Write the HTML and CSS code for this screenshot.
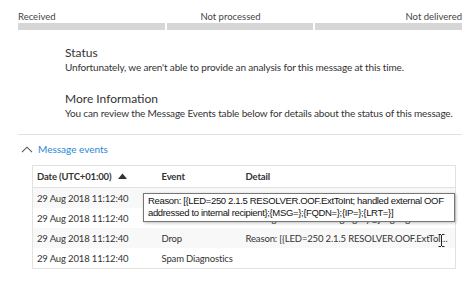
FILE: index.html
```html
<!DOCTYPE html>
<html lang="en">

<head>
  <meta charset="utf-8">
  <title>Message trace details</title>
  <link rel="stylesheet" href="styles.css">
</head>

<body>
  <div class="page">
    <!-- Delivery progress -->
    <section class="progress">
      <div class="progress-labels">
        <span>Received</span>
        <span>Not processed</span>
        <span>Not delivered</span>
      </div>
      <div class="progress-bars">
        <div class="bar"></div>
        <div class="bar"></div>
        <div class="bar"></div>
      </div>
    </section>

    <!-- Status text -->
    <section class="info">
      <h2>Status</h2>
      <p>Unfortunately, we aren't able to provide an analysis for this message at this time.</p>
      <h2>More Information</h2>
      <p>You can review the Message Events table below for details about the status of this message.</p>
    </section>

    <!-- Message events -->
    <section class="events">
      <div class="events-toggle">
        <svg class="chevron" width="12" height="7" viewBox="0 0 12 7">
          <polyline points="1,6.2 6,1.2 11,6.2" fill="none" stroke="#555" stroke-width="1.1" />
        </svg>
        <span>Message events</span>
      </div>

      <div class="table-wrap">
        <table class="events-table">
          <thead>
            <tr>
              <th class="col-date">Date (UTC+01:00)
                <svg class="sort" width="9" height="6" viewBox="0 0 9 6">
                  <polygon points="0,6 4.5,0.5 9,6" fill="#333" />
                </svg>
              </th>
              <th class="col-event">Event</th>
              <th>Detail</th>
            </tr>
          </thead>
          <tbody>
            <tr class="alt">
              <td>29 Aug 2018 11:12:40</td>
              <td>Receive</td>
              <td>Message received by: AM5PR0701MB2</td>
            </tr>
            <tr>
              <td>29 Aug 2018 11:12:40</td>
              <td>Redirect</td>
              <td>Message redirected to: gregory@jang.org</td>
            </tr>
            <tr class="alt">
              <td>29 Aug 2018 11:12:40</td>
              <td>Drop</td>
              <td class="detail">Reason: [{LED=250 2.1.5 RESOLVER.OOF.ExtToInt; handled external OOF</td>
            </tr>
            <tr>
              <td>29 Aug 2018 11:12:40</td>
              <td>Spam Diagnostics</td>
              <td></td>
            </tr>
          </tbody>
        </table>

        <!-- hover tooltip -->
        <div class="tooltip">Reason: [{LED=250 2.1.5 RESOLVER.OOF.ExtToInt; handled external OOF addressed to internal recipient};{MSG=};{FQDN=};{IP=};{LRT=}]</div>
        <svg class="cursor" width="7" height="13" viewBox="0 0 7 13">
          <path d="M0.5 0.5h2.5M4 0.5h2.5M3.5 1v11M0.5 12.5h2.5M4 12.5h2.5" stroke="#222" stroke-width="1" fill="none" />
        </svg>
      </div>
    </section>
  </div>
</body>

</html>
```

FILE: styles.css
```css
body {
  margin: 0;
  background: #fff;
  color: #333;
  font-family: Lato, "Open Sans", sans-serif;
}

.page {
  width: 444px;
  padding: 10px 0 0 18px;
}

.progress-labels {
  display: flex;
  justify-content: space-between;
  font-size: 9.5px;
  line-height: 13px;
  color: #444;
}

.progress-bars {
  display: flex;
  gap: 2px;
}

.bar {
  flex: 1;
  height: 7px;
  background: #d6d6d6;
}

.info {
  padding: 15px 0 0 47px;
}

.info h2 {
  margin: 0;
  font-size: 12px;
  font-weight: 400;
  line-height: 16px;
  color: #333;
}

.info p {
  margin: 0 0 17px;
  font-size: 10px;
  letter-spacing: -0.15px;
  line-height: 13px;
  color: #333;
}

.info p:last-child {
  margin-bottom: 0;
}

.events {
  border-top: 1px solid #e3e3e3;
  margin-top: 14px;
  padding-top: 6px;
}

.events-toggle {
  display: flex;
  align-items: center;
  gap: 5px;
  padding-left: 3px;
  font-size: 10px;
  line-height: 16px;
  color: #2b88d8;
}

.table-wrap {
  position: relative;
  margin: 8px 0 0 14px;
  width: 424px;
}

.events-table {
  width: 100%;
  table-layout: fixed;
  border: 1px solid #e2e2e2;
  border-collapse: collapse;
  font-size: 9.5px;
  letter-spacing: -0.15px;
  color: #333;
}

.events-table th {
  box-sizing: border-box;
  text-align: left;
  font-weight: 700;
  height: 22px;
  padding: 0 4px;
  border-bottom: 1px solid #e2e2e2;
}

.events-table td {
  height: 20px;
  padding: 0 4px;
  white-space: nowrap;
  overflow: hidden;
}

.events-table td.detail {
  text-overflow: ellipsis;
}

.events-table tr.alt td {
  background: #f8f8f8;
}

.col-date {
  width: 125px;
}

.col-event {
  width: 84px;
}

.sort {
  margin-left: 4px;
  vertical-align: 1px;
}

.tooltip {
  position: absolute;
  left: 111px;
  top: 28px;
  width: 302px;
  padding: 1px 4px 2px;
  background: #fff;
  border: 1px solid #767676;
  box-shadow: 1px 1px 3px rgba(0, 0, 0, 0.25);
  font-family: "Liberation Sans", Arial, sans-serif;
  font-size: 9.5px;
  letter-spacing: -0.35px;
  line-height: 12px;
  color: #111;
}

.cursor {
  position: absolute;
  left: 406px;
  top: 69px;
}
```
